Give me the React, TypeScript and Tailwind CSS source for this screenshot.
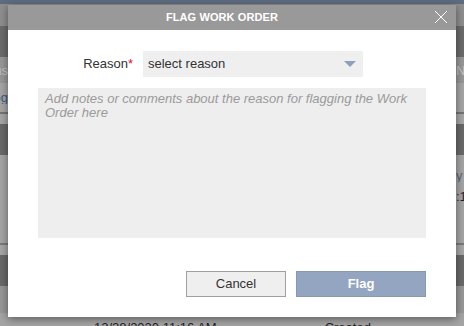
import React from "react";

function Band({ h, bg, children }: { h: string; bg: string; children?: React.ReactNode }) {
  return <div className={`${h} ${bg} flex items-center shrink-0`}>{children}</div>;
}

// fragments of words that peek out on both sides of the dialog
function Edge({ left, right, lc, rc }: { left?: string; right?: string; lc?: string; rc?: string }) {
  return (
    <div className="flex w-full text-[13px] leading-none">
      <div className="w-[8px] overflow-hidden flex justify-end">
        <span className={`whitespace-nowrap shrink-0 ${lc ?? ""}`}>{left}</span>
      </div>
      <div className="flex-1" />
      <div className="w-[8px] overflow-hidden">
        <span className={`whitespace-nowrap ${rc ?? ""}`}>{right}</span>
      </div>
    </div>
  );
}

export default function App() {
  return (
    <div className="relative w-[464px] h-[326px] overflow-hidden font-['Liberation_Sans',Arial,sans-serif]">
      {/* dimmed page underneath */}
      <div className="flex flex-col h-full">
        <Band h="h-[4px]" bg="bg-[#5f6c80]" />
        <Band h="h-[22px]" bg="bg-[#8e8e8e]" />
        <Band h="h-[31px]" bg="bg-[#6b6b6b]" />
        <Band h="h-[26px]" bg="bg-[#979797]">
          <Edge left="Status" right="Name" lc="text-[#c4c4c4]" rc="text-[#c4c4c4]" />
        </Band>
        <Band h="h-[29px]" bg="bg-[#a5a5a5]">
          <Edge left="Work Log" lc="text-[#3d5a80]" />
        </Band>
        <Band h="h-[2px]" bg="bg-[#747474]" />
        <Band h="h-[10px]" bg="bg-[#a6a6a6]" />
        <Band h="h-[31px]" bg="bg-[#696969]" />
        <div className="h-[88px] bg-[#a4a4a4] flex flex-col pt-[14px] gap-[8px] shrink-0">
          <Edge right="y" rc="text-[#5a6478]" />
          <Edge right=":1" rc="text-[#2a1e2e]" />
        </div>
        <Band h="h-[2px]" bg="bg-[#7a7a7a]" />
        <Band h="h-[10px]" bg="bg-[#a6a6a6]" />
        <Band h="h-[31px]" bg="bg-[#696969]" />
        <Band h="h-[27px]" bg="bg-[#979797]" />
        <div className="flex-1 bg-[#a4a4a4] text-[13px] text-[#222] flex items-start pt-[5px]">
          <span className="ml-[94px]">12/28/2020 11:16 AM</span>
          <span className="ml-[108px]">Created</span>
        </div>
      </div>

      {/* dialog */}
      <div className="absolute left-[8px] top-[5px] w-[448px] h-[312px] bg-white flex flex-col shadow-[0_2px_8px_rgba(0,0,0,0.45)]">
        <div className="h-[25px] bg-[#999999] relative flex items-center justify-center pr-[20px]">
          <span className="text-white font-bold text-[11px] tracking-[0.1px]">FLAG WORK ORDER</span>
          <svg className="absolute right-[8px] top-[5px]" width="14" height="14" viewBox="0 0 14 14">
            <path d="M1 1 L13 13 M13 1 L1 13" stroke="#fff" strokeWidth="1" />
          </svg>
        </div>

        <div className="flex-1 flex flex-col px-[30px] pt-[21px] pb-[20px]">
          <div className="flex items-center h-[26px]">
            <label className="w-[95px] text-right text-[13px] text-[#333]">
              Reason<span className="text-[#e8112d]">*</span>
            </label>
            <div className="ml-[10px] w-[220px] h-[26px] bg-[#efefef] flex items-center pl-[5px] pr-[7px] text-[13px] text-[#333]">
              <span className="flex-1">select reason</span>
              <svg width="12" height="6" viewBox="0 0 12 6">
                <polygon points="0,0 12,0 6,6" fill="#8fa0bd" />
              </svg>
            </div>
          </div>

          <div className="mt-[11px] h-[150px] bg-[#eeeeee] px-[7px] pt-[4px] text-[13px] leading-[14px] italic text-[#9a9a9a]">
            Add notes or comments about the reason for flagging the Work Order here
          </div>

          <div className="flex-1" />

          <div className="flex justify-end gap-[10px]">
            <button className="w-[100px] h-[26px] bg-[#efefef] border border-[#a0a0a0] text-[13px] text-[#333]">
              Cancel
            </button>
            <button className="w-[130px] h-[26px] bg-[#93a5c1] border border-[#8898b0] text-[13px] font-bold text-white">
              Flag
            </button>
          </div>
        </div>
      </div>
    </div>
  );
}
